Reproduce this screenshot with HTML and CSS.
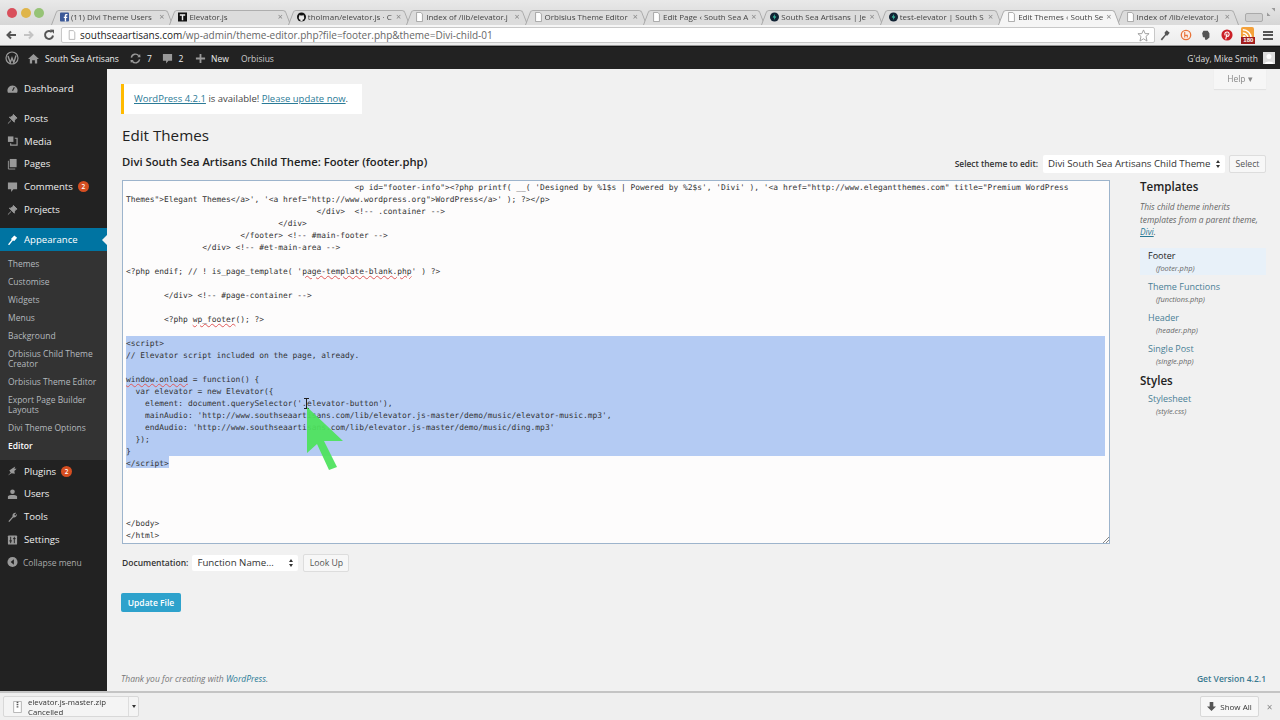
FILE: index.html
```html
<!DOCTYPE html>
<html lang="en">
<head>
<meta charset="utf-8">
<title>Edit Themes</title>
<link rel="stylesheet" href="styles.css">
</head>
<body>
<div class="screen">
  <div class="tabstrip">
    <div class="lights"><i class="light red"></i><i class="light yellow"></i><i class="light green"></i></div>
    <div class="tabs">
      <div class="tab"><svg class="fav" viewBox="0 0 10 10"><rect width="10" height="10" rx="1" fill="#3b5998"/><path d="M6.8 10V6.2H8L8.2 4.700H6.8V3.800C6.800 3.300 7 3.100 7.500 3.100H8.300V1.800H7.100C5.900 1.800 5.300 2.500 5.300 3.600V4.700H4.200V6.200H5.300V10Z" fill="#fff"/></svg><span class="tabt">(11) Divi Theme Users</span><b>×</b></div>
      <div class="tab"><svg class="fav" viewBox="0 0 10 10"><rect width="10" height="10" fill="#111"/><path d="M2 2H8V3.500H5.800V8.500H4.200V3.500H2Z" fill="#eee"/></svg><span class="tabt">Elevator.js</span><b>×</b></div>
      <div class="tab"><svg class="fav" viewBox="0 0 10 10"><circle cx="5" cy="5" r="5" fill="#111"/><path d="M3.800 9.800V8C2.500 8 2 7 2 5.500C2 4.800 2.300 4.300 2.600 4L2.700 2.600L3.900 3.200H6.100L7.300 2.600L7.400 4C7.700 4.300 8 4.800 8 5.500C8 7 7.500 8 6.200 8V9.800Z" fill="#e8e8e8"/></svg><span class="tabt">tholman/elevator.js · C</span><b>×</b></div>
      <div class="tab"><svg class="fav" viewBox="0 0 10 12"><path d="M1.500 .5H6.500L8.500 2.500V11.500H1.500Z" fill="#fff" stroke="#999"/></svg><span class="tabt">Index of /lib/elevator.j</span><b>×</b></div>
      <div class="tab"><svg class="fav" viewBox="0 0 10 12"><path d="M1.500 .5H6.500L8.500 2.500V11.500H1.500Z" fill="#fff" stroke="#999"/></svg><span class="tabt">Orbisius Theme Editor</span><b>×</b></div>
      <div class="tab"><svg class="fav" viewBox="0 0 10 12"><path d="M1.500 .5H6.500L8.500 2.500V11.500H1.500Z" fill="#fff" stroke="#999"/></svg><span class="tabt">Edit Page ‹ South Sea A</span><b>×</b></div>
      <div class="tab"><svg class="fav" viewBox="0 0 10 10"><circle cx="5" cy="5" r="5" fill="#123"/><path d="M5.800 1.500L3 5.500H5L4.200 8.500L7 4.500H5Z" fill="#3fd0b0"/></svg><span class="tabt">South Sea Artisans | Je</span><b>×</b></div>
      <div class="tab"><svg class="fav" viewBox="0 0 10 10"><circle cx="5" cy="5" r="5" fill="#123"/><path d="M5.800 1.500L3 5.500H5L4.200 8.500L7 4.500H5Z" fill="#3fd0b0"/></svg><span class="tabt">test-elevator | South S</span><b>×</b></div>
      <div class="tab active"><svg class="fav" viewBox="0 0 10 12"><path d="M1.500 .5H6.500L8.500 2.500V11.500H1.500Z" fill="#fff" stroke="#999"/></svg><span class="tabt">Edit Themes ‹ South Se</span><b>×</b></div>
      <div class="tab"><svg class="fav" viewBox="0 0 10 12"><path d="M1.500 .5H6.500L8.500 2.500V11.500H1.500Z" fill="#fff" stroke="#999"/></svg><span class="tabt">Index of /lib/elevator.j</span><b>×</b></div>
      <div class="newtab"></div>
    </div>
    <svg class="expand" viewBox="0 0 10 10"><path d="M5.500 1H9V4.500ZM4.500 9H1V5.500Z" fill="#999"/></svg>
  </div>

  <div class="toolbar">
    <svg class="nav" viewBox="0 0 12 12"><path d="M11 6H3M6 2.500L2.500 6L6 9.500" fill="none" stroke="#555" stroke-width="2"/></svg>
    <svg class="nav" viewBox="0 0 12 12"><path d="M1 6H9M6 2.500L9.500 6L6 9.500" fill="none" stroke="#c4c4c4" stroke-width="2"/></svg>
    <svg class="nav" viewBox="0 0 12 12"><path d="M10 6.500A4 4 0 1 1 8.800 3" fill="none" stroke="#555" stroke-width="2"/><path d="M7 .5L11 .8V4.800Z" fill="#555"/></svg>
    <div class="urlbar">
      <svg class="docicon" viewBox="0 0 10 12"><path d="M1.500 .5H6.500L8.500 2.500V11.500H1.500Z" fill="#fff" stroke="#aaa"/></svg>
      <span class="url"><span class="host">southseaartisans.com</span>/wp-admin/theme-editor.php?file=footer.php&amp;theme=Divi-child-01</span>
      <svg class="star" viewBox="0 0 14 14"><path d="M7 1L8.800 5H13L9.700 8L10.800 13L7 10.500L3.200 13L4.300 8L1 5H5.200Z" fill="#fff" stroke="#999"/></svg>
    </div>
    <div class="exts">
      <svg class="ext" viewBox="0 0 14 14"><path d="M2 12L7 6.500L6.500 4L9 1.500L12.500 4.500L10 7.500L8 7.500L3.500 13.500Z" fill="#555"/></svg>
      <svg class="ext" viewBox="0 0 14 14"><circle cx="7" cy="7" r="5.500" fill="#fbeee8" stroke="#e8743b" stroke-width="1.500"/><path d="M5.500 3.500V10M5.500 7.500H8.500V10" fill="none" stroke="#e8743b" stroke-width="1.300"/></svg>
      <svg class="ext" viewBox="0 0 14 14"><path d="M4 2H9L11 5V10L8 12.500H6L5.500 9.500H3.500L2.500 5Z" fill="#555"/></svg>
      <svg class="ext" viewBox="0 0 14 14"><circle cx="7" cy="7" r="6.500" fill="#cb2027"/><path d="M5.500 12L7 5.500M5 7.500C3.500 5 5.500 3.300 7.500 3.500C9.800 3.800 10 6.500 8.800 8C8 9 6.800 8.500 6.500 7.500" fill="none" stroke="#fff" stroke-width="1.300"/></svg>
      <span class="rss"><svg viewBox="0 0 14 14"><rect width="14" height="14" rx="2" fill="#f4a13a"/><circle cx="3.500" cy="10.500" r="1.500" fill="#fff"/><path d="M2 6.500A5.500 5.500 0 0 1 7.500 12M2 3A9 9 0 0 1 11 12" fill="none" stroke="#fff" stroke-width="1.600"/></svg><em class="rssn">180</em></span>
      <span class="burger"></span>
    </div>
  </div>

  <div class="adminbar">
    <svg class="wplogo" viewBox="0 0 14 14"><circle cx="7" cy="7" r="6" fill="none" stroke="#999" stroke-width="1.200"/><path d="M3 5L5.300 11.500L7 7L8.800 11.500L11 4.500" fill="none" stroke="#999" stroke-width="1.400"/></svg>
    <svg class="abicon home" viewBox="0 0 12 12"><path d="M6 1L12 6.500H10V11.500H7.500V8H4.500V11.500H2V6.500H0Z" fill="#999"/></svg>
    <span class="abtext site">South Sea Artisans</span>
    <svg class="abicon upd" viewBox="0 0 12 12"><path d="M1.500 5A4.500 4.500 0 0 1 9.500 3M10.500 7A4.500 4.500 0 0 1 2.500 9" fill="none" stroke="#999" stroke-width="1.600"/><path d="M8 4.500L11.500 4.500L11 1ZM4 7.500H.5L1 11Z" fill="#999"/></svg>
    <span class="abtext count">7</span>
    <svg class="abicon cmt" viewBox="0 0 12 12"><path d="M1 1H11V8.500H7L4.500 11.500V8.500H1Z" fill="#999"/></svg>
    <span class="abtext count">2</span>
    <svg class="abicon plus" viewBox="0 0 12 12"><path d="M6 1V11M1 6H11" stroke="#999" stroke-width="2"/></svg>
    <span class="abtext new">New</span>
    <span class="abtext orb">Orbisius</span>
    <span class="abtext hello">G'day, Mike Smith</span>
    <svg class="avatar" viewBox="0 0 12 12"><rect width="12" height="12" fill="#ddd"/><circle cx="6" cy="4.500" r="2.500" fill="#fff"/><path d="M1.500 12C1.500 8.500 10.500 8.500 10.500 12Z" fill="#fff"/></svg>
  </div>

  <div class="wp">
    <nav class="side">
      <ul class="menu first">
        <li><svg class="mi" viewBox="0 0 12 12"><path d="M1 10A5.500 5.500 0 1 1 11 10Z" fill="#999"/><path d="M6 8L8 4" stroke="#222" stroke-width="1.200"/></svg>Dashboard</li>
      </ul>
      <ul class="menu">
        <li><svg class="mi" viewBox="0 0 12 12"><path d="M7 1L11 5L9.500 5.500L8 8L8 9.500L2.500 4L4 4L6.500 2.500ZM4.500 7.500L1 11" fill="#999" stroke="#999"/></svg>Posts</li>
        <li><svg class="mi" viewBox="0 0 12 12"><path d="M1 1H7V7H1Z" fill="#999"/><path d="M8.500 3H11V10.500H4V8.500" fill="none" stroke="#999" stroke-width="1.300"/></svg>Media</li>
        <li><svg class="mi" viewBox="0 0 12 12"><path d="M3 .5H10.500V9.500H3Z" fill="#999"/><path d="M1.500 2.500V11.500H9" fill="none" stroke="#999"/></svg>Pages</li>
        <li><svg class="mi" viewBox="0 0 12 12"><path d="M1 1H11V8.500H7L4.500 11.500V8.500H1Z" fill="#999"/></svg>Comments<span class="badge">2</span></li>
        <li><svg class="mi" viewBox="0 0 12 12"><path d="M7 1L11 5L9.500 5.500L8 8L8 9.500L2.500 4L4 4L6.500 2.500ZM4.500 7.500L1 11" fill="#999" stroke="#999"/></svg>Projects</li>
      </ul>
      <ul class="menu">
        <li class="current"><svg class="mi" viewBox="0 0 12 12"><path d="M1 11L5 6L4.500 4.500L8 1L11 3.500L8 7L6.500 6.500L2.500 11.500Z" fill="#fff"/></svg>Appearance</li>
      </ul>
      <ul class="sub">
        <li>Themes</li>
        <li>Customise</li>
        <li>Widgets</li>
        <li>Menus</li>
        <li>Background</li>
        <li>Orbisius Child Theme Creator</li>
        <li>Orbisius Theme Editor</li>
        <li>Export Page Builder Layouts</li>
        <li>Divi Theme Options</li>
        <li class="on">Editor</li>
      </ul>
      <ul class="menu">
        <li><svg class="mi" viewBox="0 0 12 12"><path d="M1 11L4 7.500L2.500 5.500L6 3L9 1L8 3.500L10.500 3.500L8 6L8.500 9L5 8.500Z" fill="#999"/></svg>Plugins<span class="badge">2</span></li>
        <li><svg class="mi" viewBox="0 0 12 12"><circle cx="6" cy="3.500" r="2.500" fill="#999"/><path d="M1 11.500V8.500C2 6.500 10 6.500 11 8.500V11.500Z" fill="#999"/></svg>Users</li>
        <li><svg class="mi" viewBox="0 0 12 12"><path d="M1.500 10.500L6 5.500C5.500 3 7.500 1 10 1.500L8 3.500L9 4.500L11 2.500C11 5 9 7 6.800 6.500L2.500 11.500Z" fill="#999"/></svg>Tools</li>
        <li><svg class="mi" viewBox="0 0 12 12"><rect x="1" y="1" width="10" height="10" rx="1" fill="#999"/><path d="M4 2.500V9.500M8 2.500V9.500M2.500 7H5.500M6.500 4.500H9.500" stroke="#222"/></svg>Settings</li>
        <li class="collapse"><svg class="mi" viewBox="0 0 12 12"><circle cx="6" cy="6" r="5.500" fill="#999"/><path d="M7.500 3L4 6L7.500 9Z" fill="#222"/></svg>Collapse menu</li>
      </ul>
    </nav>

    <main class="main">
      <div class="help">Help ▾</div>
      <div class="notice"><a>WordPress 4.2.1</a> is available! <a>Please update now</a>.</div>
      <h1 class="title">Edit Themes</h1>
      <div class="head">
        <h2 class="subtitle">Divi South Sea Artisans Child Theme: Footer (footer.php)</h2>
        <div class="picker">
          <label class="lbl">Select theme to edit:</label>
          <div class="select wide">Divi South Sea Artisans Child Theme<span class="updown"></span></div>
          <div class="btn sel-btn">Select</div>
        </div>
      </div>
      <div class="work">
        <div class="editor"><div class="code">                                                <span>&lt;p id="footer-info"&gt;&lt;?php printf( __( 'Designed by %1$s | Powered by %2$s', 'Divi' ), '&lt;a href="http://www.elegantthemes.com" title="Premium WordPress</span>
Themes"&gt;Elegant Themes&lt;/a&gt;', '&lt;a href="http://www.wordpress.org"&gt;WordPress&lt;/a&gt;' ); ?&gt;&lt;/p&gt;
                                        &lt;/div&gt;  &lt;!-- .container --&gt;
                                &lt;/div&gt;
                        &lt;/footer&gt; &lt;!-- #main-footer --&gt;
                &lt;/div&gt; &lt;!-- #et-main-area --&gt;

&lt;?php endif; // ! is_page_template( '<u>page-template-blank.php</u>' ) ?&gt;

        &lt;/div&gt; &lt;!-- #page-container --&gt;

        &lt;?php <u>wp_footer</u>(); ?&gt;

<div class="selected">&lt;script&gt;
// Elevator script included on the page, already.

<u>window.onload</u> = function() {
  var elevator = new Elevator({
    element: document.querySelector('.elevator-button'),
    mainAudio: 'http://www.southseaartisans.com/lib/elevator.js-master/demo/music/elevator-music.mp3',
    endAudio: 'http://www.southseaartisans.com/lib/elevator.js-master/demo/music/ding.mp3'
  });
}</div><span class="selected-end">&lt;/script&gt;</span>




&lt;/body&gt;
&lt;/html&gt;</div>
          <svg class="ibeam" viewBox="0 0 5 11"><path d="M0 .5H5M0 10.500H5M2.500 .5V10.500" stroke="#222" fill="none"/></svg>
          <svg class="arrow" viewBox="0 0 40 66"><path d="M1 1L37 35H18L31 61L23 64L11 38L1 47Z" fill="#4de35c"/></svg>
          <svg class="grip" viewBox="0 0 6 6"><path d="M6 0L0 6M6 3L3 6" stroke="#888"/></svg>
        </div>
        <aside class="files">
          <h3 class="fh">Templates</h3>
          <p class="inherit">This child theme inherits templates from a parent theme, <a>Divi</a>.</p>
          <ul class="flist">
            <li class="cur"><span class="fn">Footer</span><span class="ff">(footer.php)</span></li>
            <li><span class="fn">Theme Functions</span><span class="ff">(functions.php)</span></li>
            <li><span class="fn">Header</span><span class="ff">(header.php)</span></li>
            <li><span class="fn">Single Post</span><span class="ff">(single.php)</span></li>
          </ul>
          <h3 class="fh styles">Styles</h3>
          <ul class="flist">
            <li><span class="fn">Stylesheet</span><span class="ff">(style.css)</span></li>
          </ul>
        </aside>
      </div>
      <div class="doc">
        <label class="lbl doclbl">Documentation:</label>
        <div class="select narrow">Function Name...<span class="updown"></span></div>
        <div class="btn look">Look Up</div>
      </div>
      <div class="update">Update File</div>
      <footer class="foot">
        <span class="thanks">Thank you for creating with <a>WordPress</a>.</span>
        <a class="ver">Get Version 4.2.1</a>
      </footer>
    </main>
  </div>

  <div class="shelf">
    <div class="dl">
      <svg class="zip" viewBox="0 0 10 14"><path d="M.5 .5H9.500V13.500H.5Z" fill="#fff" stroke="#aaa"/><path d="M5 1V8" stroke="#555" stroke-width="2" stroke-dasharray="1.500 1"/></svg>
      <div class="dlt"><span>elevator.js-master.zip</span><span>Cancelled</span></div>
      <span class="dlmenu"></span>
    </div>
    <div class="showall"><svg class="dlarrow" viewBox="0 0 10 10"><path d="M3 0H7V5H10L5 10L0 5H3Z" fill="#555"/></svg>Show All</div>
    <span class="close">×</span>
  </div>
</div>
</body>
</html>
```
FILE: styles.css
```css
* { box-sizing: border-box; }
html, body { margin: 0; padding: 0; }
body { width: 1280px; height: 720px; overflow: hidden; font-family: "Open Sans", sans-serif; color: #444; background: #f1f1f1; }
ul { list-style: none; margin: 0; padding: 0; }
h1, h2, h3, p { margin: 0; }
.screen { width: 1280px; height: 720px; display: flex; flex-direction: column; filter: blur(.45px); }

/* browser chrome */
.tabstrip { height: 25px; flex: none; display: flex; background: linear-gradient(#e9e9e9, #d6d6d6); position: relative; }
.lights { width: 53px; flex: none; display: flex; gap: 3.5px; padding: 8px 0 0 7px; }
.light { width: 10px; height: 10px; border-radius: 50%; }
.red { background: #d9505c; }
.yellow { background: #dfb54a; }
.green { background: #96c376; }
.tabs { display: flex; padding-top: 8px; }
.tab { width: 118.4px; height: 17px; position: relative; display: flex; align-items: center; padding: 0 7px; font-size: 8px; color: #444; white-space: nowrap; }
.tab::before { content: ""; position: absolute; inset: 0 -2px 0 -2px; border: 1px solid #aaa; border-bottom: 0; border-radius: 3px 3px 0 0; background: #dcdcdc; transform: perspective(40px) rotateX(14deg); transform-origin: bottom; }
.tab.active { z-index: 2; }
.tab.active::before { background: #f5f5f5; }
.tab > * { position: relative; }
.fav { width: 9px; height: 10px; flex: none; margin-right: 2px; }
.tabt { flex: 1; }
.tab b { font-weight: 400; color: #888; font-size: 9px; margin-left: 2px; }
.newtab { width: 18px; height: 9px; margin: 5px 0 0 8px; background: #d0d0d0; border: 1px solid #aaa; border-radius: 2px; }
.expand { position: absolute; top: 7px; right: 4px; width: 10px; height: 10px; }

.toolbar { height: 21px; flex: none; display: flex; align-items: center; padding: 0 7px 0 5px; background: linear-gradient(#f6f6f6, #ececec); border-bottom: 1px solid #999; }
.nav { width: 12px; height: 12px; flex: none; margin-right: 6px; }
.nav:nth-child(2) { margin-right: 8px; }
.nav:nth-child(3) { margin-right: 6px; }
.urlbar { width: 1094px; height: 16px; flex: none; display: flex; align-items: center; padding: 0 4px 0 6px; background: #fff; border: 1px solid #c8c8c8; border-radius: 2px; font-size: 10px; color: #666; white-space: nowrap; }
.docicon { width: 8px; height: 10px; margin-right: 4px; }
.url { flex: 1; }
.host { color: #222; }
.star { width: 13px; height: 13px; }
.exts { flex: 1; display: flex; align-items: center; justify-content: space-between; padding-left: 4px; }
.ext { width: 12px; height: 12px; }
.rss { width: 13px; height: 17px; position: relative; display: block; }
.rss svg { width: 13px; height: 13px; display: block; }
.rssn { position: absolute; left: 0; bottom: 0; width: 14px; background: #a31e1e; color: #fff; font: normal 700 6px/7px "Liberation Sans", sans-serif; text-align: center; }
.burger { width: 10px; height: 9px; border-top: 2px solid #555; border-bottom: 2px solid #555; position: relative; }
.burger::after { content: ""; position: absolute; left: 0; right: 0; top: 1.500px; height: 2px; background: #555; }

.adminbar { height: 23px; flex: none; display: flex; align-items: center; background: #222; color: #eee; font-size: 8.5px; padding-left: 5px; border-top: 1px solid #111; }
.wplogo { width: 14px; height: 14px; margin-right: 9px; }
.abicon { width: 11px; height: 11px; flex: none; }
.abtext { white-space: nowrap; }
.site { margin-left: 6px; width: 85px; }
.upd { margin-right: 6px; }
.count { width: 12px; }
.cmt { margin: 0 6px 0 2.5px; }
.plus { margin: 0 5.5px 0 4px; }
.new { width: 30px; }
.orb { color: #ccc; }
.hello { margin-left: auto; margin-right: 5px; color: #ddd; }
.avatar { width: 12px; height: 12px; margin-right: 5px; }

/* wp */
.wp { flex: 1; min-height: 0; display: flex; }
.side { width: 107px; flex: none; background: #222; padding-top: 8px; font-size: 9.6px; }
.menu { margin-bottom: 7.25px; }
.menu li { height: 22.75px; display: flex; align-items: center; padding-left: 24px; position: relative; color: #eee; white-space: nowrap; }
.mi { position: absolute; left: 7px; top: 5.5px; width: 11px; height: 12px; }
.current { background: #0074a2; color: #fff !important; }
.current::after { content: ""; position: absolute; right: 0; top: 7px; border: 5px solid transparent; border-right-color: #f1f1f1; border-left: 0; }
.sub { background: #333; padding: 4px 0 5px; font-size: 8.5px; margin-top: -7.25px; color: #b4b9be; }
.sub li { padding: 4px 8px; line-height: 10px; }
.sub .on { color: #fff; font-weight: 600; }
.badge { width: 11px; height: 11px; border-radius: 50%; background: #d54e21; color: #fff; font-size: 6.5px; font-weight: 600; line-height: 11px; text-align: center; margin-left: 5px; }
.collapse { font-size: 8.5px; color: #aaa !important; padding-left: 23px !important; }

.main { flex: 1; min-width: 0; display: flex; flex-direction: column; padding: 15px 14px 6px 15px; position: relative; font-size: 9.5px; background: #f1f1f1; }
a { color: #2a7a96; }
.help { position: absolute; top: 0; right: 14px; width: 52px; height: 20px; background: #f6f6f6; box-shadow: 0 1px 1px rgba(0,0,0,.06); font-size: 8.5px; color: #888; line-height: 20px; text-align: center; }
.notice { align-self: flex-start; width: 241px; height: 30px; margin-left: -1px; padding-left: 10px; background: #fff; border-left: 3px solid #ffba00; line-height: 30px; white-space: nowrap; }
.notice a { text-decoration: underline; }
.title { margin-top: 11px; font-size: 15.2px; font-weight: 400; line-height: 20px; color: #222; }
.head { margin-top: 10px; height: 18px; display: flex; align-items: center; justify-content: space-between; }
.subtitle { font-size: 11.28px; line-height: 14px; align-self: flex-start; font-weight: 600; color: #222; white-space: nowrap; }
.picker { display: flex; align-items: center; }
.lbl { font-size: 8.4px; font-weight: 600; color: #333; white-space: nowrap; position: relative; top: -1px; }
.select { background: #fff; border-radius: 2px; font-size: 9.7px; color: #333; position: relative; white-space: nowrap; line-height: 18px; height: 18px; padding-left: 5px; }
.wide { width: 182px; margin: 0 4px 0 5px; }
.updown { position: absolute; right: 4px; top: 5px; width: 5px; height: 8px; }
.updown::before, .updown::after { content: ""; position: absolute; left: 0; border: 2.5px solid transparent; }
.updown::before { top: -2px; border-bottom: 3px solid #333; }
.updown::after { bottom: -2px; border-top: 3px solid #333; }
.btn { height: 18px; background: #f7f7f7; border: 1px solid #ddd; border-radius: 2px; font-size: 8.7px; line-height: 16px; text-align: center; color: #555; }
.sel-btn { width: 37px; }
.work { margin-top: 7px; display: flex; gap: 30px; align-items: flex-start; }
.editor { width: 988px; height: 364px; flex: none; background: #fdfcfc; border: 1px solid #9db4cc; padding: 1px 0 0 3px; position: relative; overflow: hidden; }
.code { font: 7.92px/12px "DejaVu Sans Mono", monospace; color: #333; white-space: pre; }
.code u { text-decoration: underline wavy #e05a5a; text-decoration-thickness: 1px; text-underline-offset: 1px; }
.selected { background: #b4cbf3; width: 979px; height: 120px; margin-top: -2px; padding-top: 2px; }
.selected-end { background: linear-gradient(#b4cbf3 12px, transparent 12px); display: inline-block; padding-top: 2px; vertical-align: top; }
.ibeam { position: absolute; left: 181px; top: 217px; width: 5px; height: 11px; }
.arrow { position: absolute; left: 183px; top: 225px; width: 40px; height: 66px; opacity: .93; }
.grip { position: absolute; right: 0; bottom: 0; width: 6px; height: 6px; }
.files { width: 126px; flex: none; }
.fh { font-size: 11.6px; font-weight: 600; line-height: 13px; color: #222; }
.inherit { margin: 8px 0 9px; font-size: 8.4px; line-height: 12.500px; font-style: italic; color: #666; }
.inherit a { text-decoration: underline; }
.flist li { height: 31.25px; padding: 2px 0 0 8px; }
.fn { display: block; font-size: 9px; line-height: 12px; color: #4a7f96; }
.ff { display: block; font-size: 7.4px; line-height: 12px; font-style: italic; color: #666; padding-left: 8px; }
.cur { background: #e8f1f9; height: 27px !important; margin-bottom: 4px; }
.cur .fn { color: #222; }
.styles { margin: 2px 0 4px; }
.doc { margin-top: 10px; display: flex; align-items: center; height: 18px; }
.doclbl { font-size: 8.5px; }
.narrow { width: 106px; margin: 0 5px 0 4px; height: 16px; line-height: 16px; }
.narrow .updown { top: 4px; }
.look { width: 46px; }
.update { margin-top: 21px; margin-left: -1px; width: 60px; height: 19px; background: #2ea2cc; border-radius: 2px; color: #fff; font-size: 8.5px; font-weight: 600; line-height: 19px; text-align: center; }
.foot { margin-top: auto; display: flex; justify-content: space-between; align-items: center; height: 14px; font-size: 8.5px; }
.thanks { font-style: italic; color: #777; margin-left: -1px; }
.ver { color: #3a7a90; font-size: 8.5px; font-weight: 600; }

/* shelf */
.shelf { height: 29px; flex: none; display: flex; align-items: center; padding: 0 6px 0 3px; background: #efefef; border-top: 2px solid #c4c4c4; font-size: 8px; color: #333; }
.dl { width: 136px; height: 21px; display: flex; align-items: center; background: #f4f4f4; border: 1px solid #d8d8d8; border-radius: 2px; padding-left: 9px; position: relative; }
.zip { width: 9px; height: 12px; margin-right: 6px; }
.dlt { display: flex; flex-direction: column; line-height: 10px; white-space: nowrap; font-size: 7.8px; }
.dlmenu { position: absolute; right: 0; top: 0; bottom: 0; width: 10px; border-left: 1px solid #ddd; }
.dlmenu::after { content: ""; position: absolute; left: 3px; top: 8px; border: 2px solid transparent; border-top: 3px solid #333; border-bottom: 0; }
.showall { margin-left: auto; width: 59px; height: 21px; background: #f7f7f7; border: 1px solid #d8d8d8; border-radius: 2px; display: flex; align-items: center; justify-content: center; gap: 4px; }
.dlarrow { width: 9px; height: 9px; }
.close { margin-left: 6px; width: 9px; color: #888; font-size: 10px; text-align: center; }
```
